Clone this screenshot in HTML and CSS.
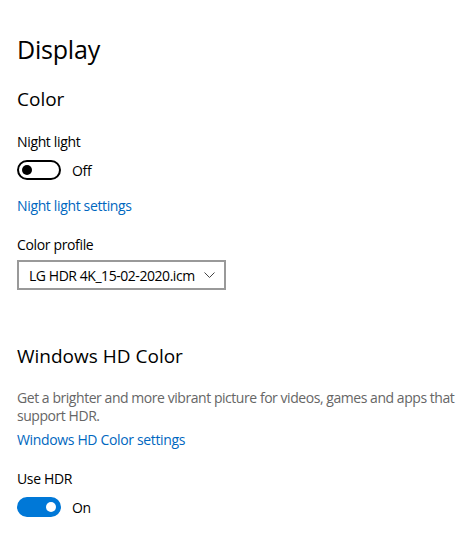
FILE: index.html
```html
<!DOCTYPE html>
<html lang="en">
<head>
<meta charset="UTF-8" />
<meta name="viewport" content="width=device-width, initial-scale=1" />
<title>Display</title>
<link rel="stylesheet" href="styles.css">
</head>
<body>
<main class="page">
  <h1 class="page-title">Display</h1>

  <section class="group">
    <h2 class="group-title">Color</h2>

    <div class="setting">
      <div class="label">Night light</div>
      <div class="toggle-row">
        <span class="toggle"><span class="knob"></span></span>
        <span class="state">Off</span>
      </div>
    </div>

    <a class="link link-night" href="#">Night light settings</a>

    <div class="setting setting-profile">
      <div class="label">Color profile</div>
      <div class="select">
        <span class="select-value">LG HDR 4K_15-02-2020.icm</span>
        <svg class="chevron" viewBox="0 0 11 6" aria-hidden="true"><path d="M0.5 0.5L5.5 5.5L10.5 0.5" /></svg>
      </div>
    </div>
  </section>

  <section class="group group-hdr">
    <h2 class="group-title">Windows HD Color</h2>
    <p class="desc">Get a brighter and more vibrant picture for videos, games and apps that support HDR.</p>
    <a class="link" href="#">Windows HD Color settings</a>

    <div class="setting setting-hdr">
      <div class="label">Use HDR</div>
      <div class="toggle-row">
        <span class="toggle on"><span class="knob"></span></span>
        <span class="state">On</span>
      </div>
    </div>
  </section>
</main>
</body>
</html>
```

FILE: styles.css
```css
body {
  margin: 0;
  background: #fff;
  color: #000;
  font-family: 'Open Sans', 'Noto Sans', sans-serif;
  font-size: 14px;
  letter-spacing: -0.35px;
  width: 474px;
  height: 533px;
  overflow: hidden;
}

.page {
  padding: 30px 0 0 17px;
}

.page-title {
  margin: 0;
  font-size: 25px;
  font-weight: 400;
  line-height: 38px;
  letter-spacing: -0.2px;
}

.group-title {
  margin: 0;
  font-size: 19px;
  font-weight: 400;
  line-height: 26px;
  letter-spacing: 0;
}

.group {
  margin-top: 18px;
}
.group-hdr {
  margin-top: 53px;
}

.setting {
  margin-top: 20px;
}

.label {
  line-height: 20px;
}

/* switch + its state text */
.toggle-row {
  display: flex;
  align-items: center;
  gap: 11px;
  margin-top: 8px;
  height: 20px;
}

.toggle {
  box-sizing: border-box;
  width: 44px;
  height: 20px;
  border: 2px solid #000;
  border-radius: 10px;
  display: flex;
  align-items: center;
  padding-left: 3px;
}
.toggle .knob {
  width: 10px;
  height: 10px;
  border-radius: 50%;
  background: #000;
}
.toggle.on {
  background: #0078d7;
  border-color: #0078d7;
  justify-content: flex-end;
  padding: 0 3px 0 0;
}
.toggle.on .knob {
  background: #fff;
}

.link {
  display: block;
  color: #0067c0;
  text-decoration: none;
  line-height: 20px;
}
.link-night {
  margin-top: 16px;
}

.setting-profile {
  margin-top: 19px;
}

.select {
  box-sizing: border-box;
  width: 209px;
  height: 30px;
  margin-top: 5px;
  border: 2px solid #999;
  display: flex;
  align-items: center;
  justify-content: space-between;
  padding: 0 9px 0 10px;
  white-space: nowrap;
  letter-spacing: -0.45px;
}
.chevron {
  width: 11px;
  height: 6px;
  fill: none;
  stroke: #444;
  stroke-width: 1;
}

.desc {
  margin: 20px 0 5px;
  color: #666;
  line-height: 18px;
  letter-spacing: -0.45px;
}

.setting-hdr {
  margin-top: 19px;
}
```
